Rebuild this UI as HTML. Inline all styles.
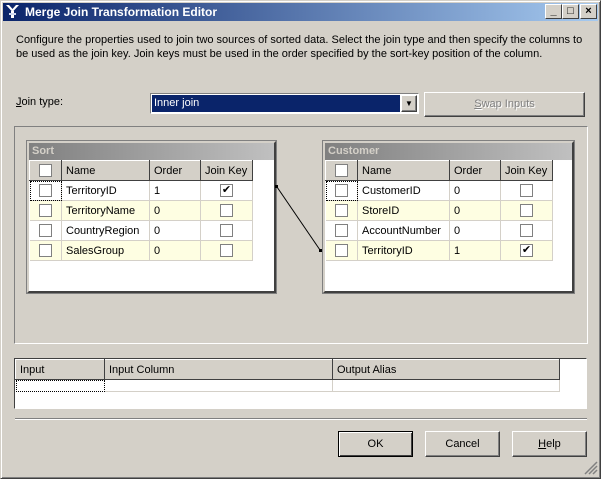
<!DOCTYPE html>
<html><head><style>
*{box-sizing:border-box;margin:0;padding:0}
body{width:601px;height:482px;background:#fff;font-family:"Liberation Sans",sans-serif;font-size:11px;color:#000;position:relative;overflow:hidden}
.a{position:absolute}
.win{left:0;top:0;width:601px;height:479px;background:#d4d0c8;border:1px solid;border-color:#d4d0c8 #404040 #404040 #d4d0c8;box-shadow:inset 1px 1px 0 #fff,inset -1px -1px 0 #808080}
.title{left:3px;top:3px;width:595px;height:18px;background:linear-gradient(to right,#0a246a,#a6caf0);color:#fff;font-weight:bold;font-size:12px;line-height:18px;padding-left:22px}
.tb{top:4px;width:17px;height:15px;background:#d4d0c8;border:1px solid;border-color:#fff #404040 #404040 #fff;font-size:11px;line-height:12px;text-align:center;font-weight:bold;color:#000}
.btn{background:#d4d0c8;border:1px solid;border-color:#fff #404040 #404040 #fff;box-shadow:inset -1px -1px 0 #808080;text-align:center;font-size:11px}
.sunk{border:1px solid;border-color:#808080 #fff #fff #808080}
.box{background:#fff;border:2px solid;border-color:#d4d0c8 #404040 #404040 #d4d0c8;outline:1px solid #808080}
.bh{height:17px;background:linear-gradient(to right,#808080,#c0c0c0);color:#d4d0c8;font-weight:bold;font-size:11px;line-height:17px;padding-left:3px}
table{border-collapse:collapse;font-size:11px}
td{height:20px;border-right:1px solid #d4d0c8;border-bottom:1px solid #d4d0c8;padding-left:4px}
th{height:20px;font-weight:normal;text-align:left;padding-left:4px;background:#d4d0c8;border:1px solid;border-color:#fff #404040 #404040 #fff}
tr.y td{background:#fefee2}
.cb{display:inline-block;width:13px;height:13px;border:1px solid #808080;background:#fff;vertical-align:middle;position:relative;font-size:11px;line-height:10px;text-align:center}
.c{text-align:center;padding-left:0}
</style></head><body>
<div class="a win"></div>
<div class="a title">Merge Join Transformation Editor</div>
<svg class="a" style="left:5px;top:4px" width="15" height="15" viewBox="0 0 15 15"><path d="M1 1 L7.5 8 L14 1 L11 1 L7.5 5 L4 1Z" fill="#fff"/><rect x="6" y="7" width="3" height="7" fill="#fff"/><rect x="4" y="9" width="7" height="2" fill="#cfd8ef"/></svg>
<div class="a tb" style="left:545px">_</div>
<div class="a tb" style="left:562px">□</div>
<div class="a tb" style="left:580px">×</div>
<div class="a" style="left:16px;top:33px;width:575px;line-height:14px">Configure the properties used to join two sources of sorted data. Select the join type and then specify the columns to be used as the join key. Join keys must be used in the order specified by the sort-key position of the column.</div>
<div class="a" style="left:16px;top:96px"><u>J</u>oin type:</div>
<div class="a sunk" style="left:150px;top:93px;width:269px;height:21px;background:#fff;padding:1px">
 <div style="background:#0a246a;color:#fff;height:17px;line-height:16px;padding-left:2px;width:248px">Inner join</div>
 <div class="btn a" style="right:1px;top:1px;width:16px;height:17px;font-size:8px;line-height:15px">▼</div>
</div>
<div class="a btn" style="left:424px;top:92px;width:161px;height:25px;line-height:23px;color:#808080;text-shadow:1px 1px 0 #fff"><u>S</u>wap Inputs</div>
<div class="a sunk" style="left:14px;top:126px;width:574px;height:218px"></div>

<div class="a box" style="left:27px;top:141px;width:249px;height:152px">
<div class="bh">Sort</div>
<table><tr><th style="width:32px" class="c"><span class="cb"></span></th><th style="width:88px">Name</th><th style="width:51px">Order</th><th style="width:52px">Join Key</th></tr>
<tr><td class="c" style="outline:1px dotted #000;outline-offset:-1px"><span class="cb"></span></td><td>TerritoryID</td><td>1</td><td class="c"><span class="cb">✔</span></td></tr>
<tr class="y"><td class="c"><span class="cb"></span></td><td>TerritoryName</td><td>0</td><td class="c"><span class="cb"></span></td></tr>
<tr><td class="c"><span class="cb"></span></td><td>CountryRegion</td><td>0</td><td class="c"><span class="cb"></span></td></tr>
<tr class="y"><td class="c"><span class="cb"></span></td><td>SalesGroup</td><td>0</td><td class="c"><span class="cb"></span></td></tr></table>
</div>
<div class="a box" style="left:323px;top:141px;width:251px;height:152px">
<div class="bh">Customer</div>
<table><tr><th style="width:32px" class="c"><span class="cb"></span></th><th style="width:92px">Name</th><th style="width:51px">Order</th><th style="width:52px">Join Key</th></tr>
<tr><td class="c" style="outline:1px dotted #000;outline-offset:-1px"><span class="cb"></span></td><td>CustomerID</td><td>0</td><td class="c"><span class="cb"></span></td></tr>
<tr class="y"><td class="c"><span class="cb"></span></td><td>StoreID</td><td>0</td><td class="c"><span class="cb"></span></td></tr>
<tr><td class="c"><span class="cb"></span></td><td>AccountNumber</td><td>0</td><td class="c"><span class="cb"></span></td></tr>
<tr class="y"><td class="c"><span class="cb"></span></td><td>TerritoryID</td><td>1</td><td class="c"><span class="cb">✔</span></td></tr></table>
</div>
<svg class="a" style="left:270px;top:180px" width="60" height="80"><line x1="7" y1="7" x2="50" y2="70" stroke="#000"/><rect x="5" y="5" width="3" height="3"/><rect x="49" y="69" width="3" height="3"/></svg>

<div class="a sunk" style="left:14px;top:358px;width:573px;height:51px;background:#fff;border-color:#404040 #fff #fff #404040">
<table><tr><th style="width:89px">Input</th><th style="width:228px">Input Column</th><th style="width:227px">Output Alias</th></tr>
<tr><td style="height:12px;outline:1px dotted #000;outline-offset:-1px;border:none"></td><td style="height:12px"></td><td style="height:12px"></td></tr></table>
</div>
<div class="a" style="left:15px;top:418px;width:572px;height:2px;border-top:1px solid #808080;border-bottom:1px solid #fff"></div>
<div class="a btn" style="left:338px;top:431px;width:75px;height:26px;line-height:24px;border:1px solid #000;box-shadow:inset 1px 1px 0 #fff,inset -1px -1px 0 #404040">OK</div>
<div class="a btn" style="left:425px;top:431px;width:75px;height:26px;line-height:24px">Cancel</div>
<div class="a btn" style="left:512px;top:431px;width:75px;height:26px;line-height:24px"><u>H</u>elp</div>
<svg class="a" style="left:584px;top:461px" width="14" height="14"><path d="M13 1L1 13M13 5L5 13M13 9L9 13" stroke="#808080" stroke-width="1.5"/></svg>
</body></html>
